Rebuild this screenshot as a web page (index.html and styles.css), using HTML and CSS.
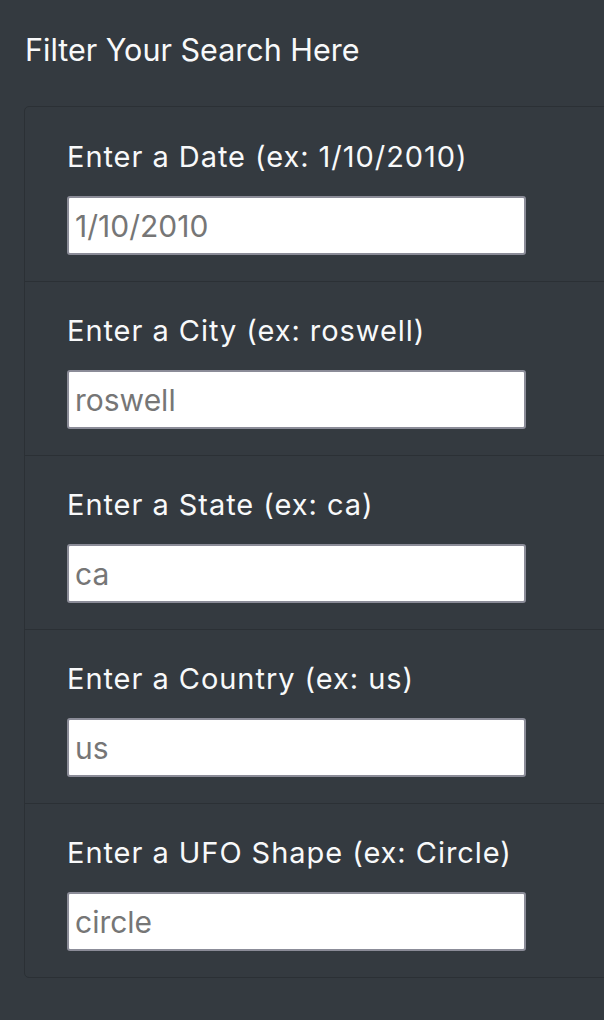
FILE: index.html
```html
<!DOCTYPE html>
<html>
<head>
<meta charset="utf-8">
<link rel="stylesheet" href="styles.css">
</head>
<body>
<div class="page">
  <h5 class="title">Filter Your Search Here</h5>
  <ul class="filters">
    <li class="filter">
      <label class="label" for="datetime">Enter a Date (ex: 1/10/2010)</label>
      <input class="field" id="datetime" type="text" placeholder="1/10/2010">
    </li>
    <li class="filter">
      <label class="label" for="city">Enter a City (ex: roswell)</label>
      <input class="field" id="city" type="text" placeholder="roswell">
    </li>
    <li class="filter">
      <label class="label" for="state">Enter a State (ex: ca)</label>
      <input class="field" id="state" type="text" placeholder="ca">
    </li>
    <li class="filter">
      <label class="label" for="country">Enter a Country (ex: us)</label>
      <input class="field" id="country" type="text" placeholder="us">
    </li>
    <li class="filter">
      <label class="label" for="shape">Enter a UFO Shape (ex: Circle)</label>
      <input class="field" id="shape" type="text" placeholder="circle">
    </li>
  </ul>
</div>
</body>
</html>
```
FILE: styles.css
```css
html, body {
  margin: 0;
  padding: 0;
  background: #343a40;
  overflow: hidden;
}
body {
  font-family: Inter, "Liberation Sans", Arial, sans-serif;
  color: #f8f9fa;
}
.page {
  padding: 0 0 0 24px;
  width: 620px;
}
.title {
  margin: 0;
  padding: 30px 0 0 1px;
  height: 106px;
  box-sizing: border-box;
  font-size: 30.5px;
  line-height: 40px;
  font-weight: 400;
}
.filters {
  list-style: none;
  margin: 0;
  padding: 0;
  border: 1px solid #2b3035;
  border-radius: 5px;
  display: flex;
  flex-direction: column;
}
.filter {
  display: flex;
  flex-direction: column;
  align-items: flex-start;
  padding: 29px 0 26px 42px;
}
.filter:first-child {
  padding-top: 30px;
}
.filter + .filter {
  border-top: 1px solid #2b3035;
}
.label {
  display: block;
  font-size: 29px;
  letter-spacing: 0.95px;
  line-height: 40px;
  margin-bottom: 19px;
}
.field {
  width: 459px;
  height: 59px;
  box-sizing: border-box;
  margin: 0;
  padding: 0 6px;
  border: 2px solid #8b8c98;
  border-radius: 3px;
  background: #fff;
  font-family: Inter, "Liberation Sans", Arial, sans-serif;
  font-size: 30px;
  color: #495057;
  outline: none;
}
.field::placeholder {
  color: #767676;
  opacity: 1;
}
```
